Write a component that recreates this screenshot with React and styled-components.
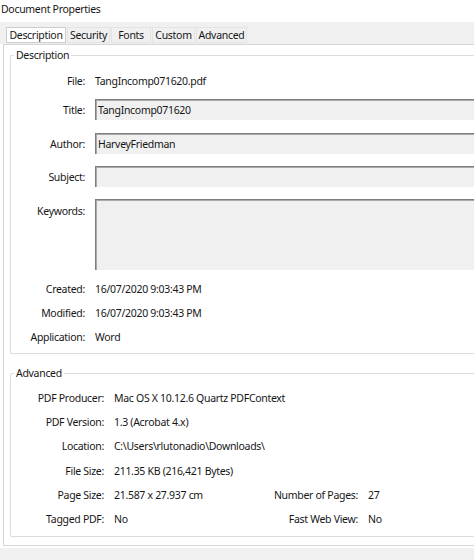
import React from "react";
import styled, { createGlobalStyle } from "styled-components";

const Global = createGlobalStyle`
  html, body { margin: 0; padding: 0; background: #ffffff; }
  body {
    font-family: "Noto Sans", "Open Sans", sans-serif;
    font-size: 10.5px;
    letter-spacing: -0.3px;
    color: #161616;
  }
  * { box-sizing: border-box; }
`;

const Window = styled.div`
  width: 474px;
  height: 560px;
  overflow: hidden;
  display: flex;
  flex-direction: column;
  background: #ffffff;
`;

const Title = styled.div`
  height: 22px;
  line-height: 18px;
  padding-left: 1px;
`;

const TabStrip = styled.div`
  height: 22px;
  background: #f0f0f0;
  display: flex;
  align-items: flex-start;
  padding: 5px 0 0 6px;
`;

const Tab = styled.div`
  width: ${(p) => p.$w}px;
  height: 16px;
  line-height: 14px;
  text-align: center;
  background: ${(p) => (p.$active ? "#ffffff" : "#f0f0f0")};
  border: 1px solid ${(p) => (p.$active ? "#cdcdcd" : "#e4e4e4")};
  margin-right: 1px;
  white-space: nowrap;
`;

const Body = styled.div`
  padding: 0 0 2px 3px;
`;

const Panel = styled.div`
  height: 502px;
  border: 1px solid #d6d6d6;
  border-right: none;
  background: #ffffff;
  padding: 0 0 6px 0;
  display: flex;
  flex-direction: column;
`;

const Group = styled.fieldset`
  margin: ${(p) => p.$mt}px 0 0 6px;
  padding: ${(p) => p.$pt}px 0 ${(p) => p.$pb}px 0;
  border: 1px solid #dcdcdc;
  border-right: none;
  border-radius: 2px 0 0 2px;
  min-width: 0;
`;

const Legend = styled.legend`
  margin-left: 3px;
  padding: 0 2px;
  line-height: 16px;
  height: 16px;
`;

const Form = styled.div`
  display: flex;
  flex-direction: column;
`;

const Row = styled.div`
  display: flex;
  align-items: ${(p) => (p.$top ? "flex-start" : "center")};
  min-height: ${(p) => p.$h || 18}px;
  margin-top: ${(p) => p.$mt || 0}px;
`;

const Label = styled.div`
  width: 74px;
  flex: none;
  text-align: right;
  margin-right: 10px;
  padding-top: ${(p) => (p.$top ? 5 : 0)}px;
  white-space: nowrap;
`;

const Value = styled.div`
  white-space: nowrap;
`;

const Field = styled.div`
  flex: 1;
  height: ${(p) => p.$h}px;
  background: #f0f0f0;
  border-top: 1px solid #7e7e7e;
  border-left: 1px solid #7e7e7e;
  box-shadow: inset 1px 1px 0 #a9a9a9;
  padding: 2px 0 0 2px;
  line-height: 16px;
  white-space: nowrap;
`;

const InfoGrid = styled.div`
  display: grid;
  grid-template-columns: 93px 120px 114px 1fr;
  column-gap: 10px;
  grid-auto-rows: 24.2px;
  align-items: center;
`;

const GLabel = styled.div`
  text-align: right;
  white-space: nowrap;
`;

const GValue = styled.div`
  white-space: nowrap;
  grid-column: ${(p) => (p.$span ? "2 / span 3" : "auto")};
`;

const Footer = styled.div`
  flex: 1;
  background: #f0f0f0;
`;

const tabs = [
  { t: "Description", w: 60, active: true },
  { t: "Security", w: 43 },
  { t: "Fonts", w: 40 },
  { t: "Custom", w: 43 },
  { t: "Advanced", w: 51 },
];

export default function App() {
  return (
    <Window>
      <Global />
      <Title>Document Properties</Title>
      <TabStrip>
        {tabs.map((x) => (
          <Tab key={x.t} $w={x.w} $active={x.active}>
            {x.t}
          </Tab>
        ))}
      </TabStrip>
      <Body>
        <Panel>
          <Group $mt={2} $pt={9} $pb={7}>
            <Legend>Description</Legend>
            <Form>
              <Row>
                <Label>File:</Label>
                <Value>TangIncomp071620.pdf</Value>
              </Row>
              <Row $h={21} $mt={9}>
                <Label>Title:</Label>
                <Field $h={21}>TangIncomp071620</Field>
              </Row>
              <Row $h={21} $mt={13}>
                <Label>Author:</Label>
                <Field $h={21}>HarveyFriedman</Field>
              </Row>
              <Row $h={21} $mt={12}>
                <Label>Subject:</Label>
                <Field $h={21} />
              </Row>
              <Row $h={71} $mt={12} $top>
                <Label $top>Keywords:</Label>
                <Field $h={71} />
              </Row>
              <Row $mt={10}>
                <Label>Created:</Label>
                <Value>16/07/2020 9:03:43 PM</Value>
              </Row>
              <Row $mt={6}>
                <Label>Modified:</Label>
                <Value>16/07/2020 9:03:43 PM</Value>
              </Row>
              <Row $mt={6}>
                <Label>Application:</Label>
                <Value>Word</Value>
              </Row>
            </Form>
          </Group>
          <Group $mt={11} $pt={5} $pb={5}>
            <Legend>Advanced</Legend>
            <InfoGrid>
              <GLabel>PDF Producer:</GLabel>
              <GValue $span>Mac OS X 10.12.6 Quartz PDFContext</GValue>
              <GLabel>PDF Version:</GLabel>
              <GValue $span>1.3 (Acrobat 4.x)</GValue>
              <GLabel>Location:</GLabel>
              <GValue $span>C:\Users\rlutonadio\Downloads\</GValue>
              <GLabel>File Size:</GLabel>
              <GValue $span>211.35 KB (216,421 Bytes)</GValue>
              <GLabel>Page Size:</GLabel>
              <GValue>21.587 x 27.937 cm</GValue>
              <GLabel>Number of Pages:</GLabel>
              <GValue>27</GValue>
              <GLabel>Tagged PDF:</GLabel>
              <GValue>No</GValue>
              <GLabel>Fast Web View:</GLabel>
              <GValue>No</GValue>
            </InfoGrid>
          </Group>
        </Panel>
      </Body>
      <Footer />
    </Window>
  );
}
